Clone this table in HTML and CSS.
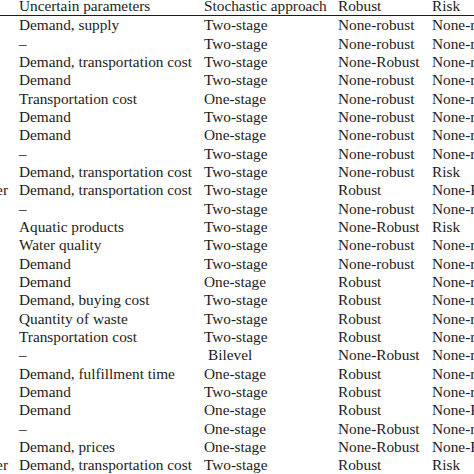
FILE: index.html
```html
<!DOCTYPE html>
<html>
<head>
<meta charset="utf-8">
<link rel="stylesheet" href="styles.css">
</head>
<body>
<div class="table">
  <div class="row head"><span class="c0"></span><span>Uncertain parameters</span><span>Stochastic approach</span><span>Robust</span><span>Risk</span></div>
  <div class="row"><span class="c0"></span><span>Demand, supply</span><span>Two-stage</span><span>None-robust</span><span>None-robust</span></div>
  <div class="row"><span class="c0"></span><span>–</span><span>Two-stage</span><span>None-robust</span><span>None-robust</span></div>
  <div class="row"><span class="c0"></span><span>Demand, transportation cost</span><span>Two-stage</span><span>None-Robust</span><span>None-robust</span></div>
  <div class="row"><span class="c0"></span><span>Demand</span><span>Two-stage</span><span>None-robust</span><span>None-robust</span></div>
  <div class="row"><span class="c0"></span><span>Transportation cost</span><span>One-stage</span><span>None-robust</span><span>None-robust</span></div>
  <div class="row"><span class="c0"></span><span>Demand</span><span>Two-stage</span><span>None-robust</span><span>None-robust</span></div>
  <div class="row"><span class="c0"></span><span>Demand</span><span>One-stage</span><span>None-robust</span><span>None-robust</span></div>
  <div class="row"><span class="c0"></span><span>–</span><span>Two-stage</span><span>None-robust</span><span>None-robust</span></div>
  <div class="row"><span class="c0"></span><span>Demand, transportation cost</span><span>Two-stage</span><span>None-robust</span><span>Risk</span></div>
  <div class="row"><span class="c0">Retailer</span><span>Demand, transportation cost</span><span>Two-stage</span><span>Robust</span><span>None-Risk</span></div>
  <div class="row"><span class="c0"></span><span>–</span><span>Two-stage</span><span>None-robust</span><span>None-robust</span></div>
  <div class="row"><span class="c0"></span><span>Aquatic products</span><span>Two-stage</span><span>None-Robust</span><span>Risk</span></div>
  <div class="row"><span class="c0"></span><span>Water quality</span><span>Two-stage</span><span>None-robust</span><span>None-robust</span></div>
  <div class="row"><span class="c0"></span><span>Demand</span><span>Two-stage</span><span>None-robust</span><span>None-robust</span></div>
  <div class="row"><span class="c0"></span><span>Demand</span><span>One-stage</span><span>Robust</span><span>None-robust</span></div>
  <div class="row"><span class="c0"></span><span>Demand, buying cost</span><span>Two-stage</span><span>Robust</span><span>None-robust</span></div>
  <div class="row"><span class="c0"></span><span>Quantity of waste</span><span>Two-stage</span><span>Robust</span><span>None-robust</span></div>
  <div class="row"><span class="c0"></span><span>Transportation cost</span><span>Two-stage</span><span>Robust</span><span>None-robust</span></div>
  <div class="row"><span class="c0"></span><span>–</span><span class="bilevel">Bilevel</span><span>None-Robust</span><span>None-robust</span></div>
  <div class="row"><span class="c0"></span><span>Demand, fulfillment time</span><span>One-stage</span><span>Robust</span><span>None-robust</span></div>
  <div class="row"><span class="c0"></span><span>Demand</span><span>Two-stage</span><span>Robust</span><span>None-robust</span></div>
  <div class="row"><span class="c0"></span><span>Demand</span><span>One-stage</span><span>Robust</span><span>None-Risk</span></div>
  <div class="row"><span class="c0"></span><span>–</span><span>One-stage</span><span>None-Robust</span><span>None-robust</span></div>
  <div class="row"><span class="c0"></span><span>Demand, prices</span><span>One-stage</span><span>None-Robust</span><span>None-Risk</span></div>
  <div class="row"><span class="c0">Retailer</span><span>Demand, transportation cost</span><span>Two-stage</span><span>Robust</span><span>Risk</span></div>
</div>
</body>
</html>
```

FILE: styles.css
```css
html, body {
  margin: 0;
  padding: 0;
  background: #ffffff;
  overflow: hidden;
  width: 474px;
  height: 474px;
}

.table {
  margin-top: -3px;
  margin-left: -41px;
  width: 560px;
  font-family: "Liberation Serif", "Times New Roman", serif;
  font-size: 15.3px;
  line-height: 18.33px;
  color: #1c1c1c;
}

.row {
  display: grid;
  grid-template-columns: 60px 185px 134px 94px 87px;
  white-space: nowrap;
}

.row span {
  overflow: visible;
}

.row.head {
  border-bottom: 1px solid #1c1c1c;
}

.c0 {
  text-align: right;
  padding-right: 11px;
}

.bilevel {
  padding-left: 4px;
}
```
